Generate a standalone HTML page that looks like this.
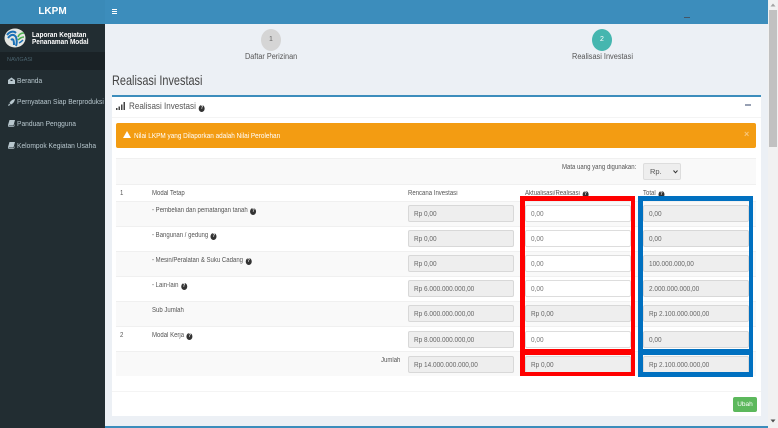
<!DOCTYPE html>
<html style="background:#ecf0f5"><head><meta charset="utf-8"><style>
*{box-sizing:border-box}
html,body{margin:0;padding:0;width:778px;height:428px;overflow:hidden;font-family:"Liberation Sans",sans-serif;color:#444}
body{filter:blur(.25px)}
.a{position:absolute}
.t{position:absolute;white-space:nowrap;font-size:7px;line-height:9px;color:#555;transform:scaleX(.86);transform-origin:0 50%}
.i{position:absolute;width:106px;height:17px;border:1px solid #d8d8d8;border-radius:2px;background:#eee;font-size:7.5px;line-height:15px;padding-left:5px;color:#666;white-space:nowrap}
.i span{display:inline-block;transform:scaleX(.86);transform-origin:0 50%}
.w{background:#fff;border-color:#ddd;color:#777}
.q{display:inline-block;position:relative;top:-1px;width:7px;height:7px;border-radius:50%;background:#333;color:#fff;font-size:5px;line-height:7px;text-align:center;font-weight:bold;vertical-align:-1px;margin-left:1px}
.n{position:absolute;left:17px;white-space:nowrap;font-size:7.5px;line-height:10px;color:#b8c7ce;transform:scaleX(.89);transform-origin:0 50%}
.s{position:absolute;left:116px;width:640px;background:#f9f9f9}
.l{position:absolute;left:116px;width:640px;height:1px;background:#f0f0f0}
</style></head><body>
<div class="a" style="left:0;top:0;width:768px;height:24px;background:#3c8dbc"></div>
<div class="a" style="left:0;top:0;width:105px;height:24px;background:#3a8ab8;color:#fff;font-weight:bold;font-size:10px;line-height:23px;text-align:center">LKPM</div>
<div class="a" style="left:112px;top:9px;width:5px;height:1.2px;background:#fff;box-shadow:0 2px 0 #fff,0 4px 0 #fff"></div>
<div class="a" style="left:684px;top:17px;width:6px;height:1px;background:#456"></div>
<div class="a" style="left:0;top:24px;width:105px;height:404px;background:#222d32"></div>
<div class="a" style="left:0;top:52px;width:105px;height:18px;background:#1a2226"></div>
<svg class="a" style="left:4px;top:28px" width="22" height="20" viewBox="0 0 22 20"><ellipse cx="11" cy="10" rx="10.500" ry="9.500" fill="#e4e6e2"/><path d="M3 7C6 3 10 3 12 5M4 10C7 6 10 6 12 9C13 12 13 15 12 18M7 12C9 10 10 12 10 17" fill="none" stroke="#1a6fb5" stroke-width="2"/><path d="M14 9C15 6 17 5 20 5M14 12C16 10 18 9 20 9" fill="none" stroke="#4caf50" stroke-width="1.500"/><path d="M15 15C17 14 18 13 19 12" fill="none" stroke="#1a6fb5" stroke-width="1.500"/></svg>
<div class="a" style="left:32px;top:32px;font-size:7px;line-height:7px;font-weight:bold;color:#fff;white-space:nowrap;transform:scaleX(.92);transform-origin:0 50%">Laporan Kegiatan<br>Penanaman Modal</div>
<div class="a" style="left:7px;top:57px;font-size:5.500px;line-height:7px;color:#4b646f">NAVIGASI</div>
<svg class="a" style="left:8px;top:77px" width="7" height="7" viewBox="0 0 7 7"><path d="M0 3L3.500 0.500L7 3V7H0Z M2.500 4H4.500V2.800H2.500Z" fill="#b8c7ce"/></svg>
<svg class="a" style="left:8px;top:99px" width="7" height="7" viewBox="0 0 7 7"><path d="M7 0C4 .5 2.500 2 1.500 4L3 5.500C5 4.500 6.500 3 7 0ZM1 4.500L0 7L2.500 6Z" fill="#b8c7ce"/></svg>
<svg class="a" style="left:8px;top:120px" width="7" height="7" viewBox="0 0 7 7"><path d="M1.500 0H7L5.500 5.500H1Q.2 6 1 6.200H5.800L6.500 3.500V6L5.500 7H1Q-.3 6.500 0 5Z" fill="#b8c7ce"/></svg>
<svg class="a" style="left:8px;top:142px" width="7" height="7" viewBox="0 0 7 7"><path d="M1.500 0H7L5.500 5.500H1Q.2 6 1 6.200H5.800L6.500 3.500V6L5.500 7H1Q-.3 6.500 0 5Z" fill="#b8c7ce"/></svg>
<div class="n" style="top:76px">Beranda</div>
<div class="n" style="top:97px">Pernyataan Siap Berproduksi</div>
<div class="n" style="top:119px">Panduan Pengguna</div>
<div class="n" style="top:141px">Kelompok Kegiatan Usaha</div>

<div class="a" style="left:261px;top:29px;width:20px;height:22px;border-radius:50%;background:#d5d5d5;color:#666;font-size:7px;line-height:22px;text-align:center">1</div>
<div class="a" style="left:592px;top:29px;width:20px;height:22px;border-radius:50%;background:#45b6af;color:#fff;font-size:7px;line-height:22px;text-align:center">2</div>
<div class="t" style="left:245px;top:52px;font-size:8px;line-height:10px;color:#555;transform:scaleX(.91)">Daftar Perizinan</div>
<div class="t" style="left:572px;top:52px;font-size:8px;line-height:10px;color:#555;transform:scaleX(.92)">Realisasi Investasi</div>
<div class="a" style="left:112px;top:72px;font-size:14px;line-height:16px;color:#444;white-space:nowrap;transform:scaleX(.78);transform-origin:0 50%">Realisasi Investasi</div>

<div class="a" style="left:112px;top:95px;width:649px;height:321px;background:#fff;border-top:2px solid #3c8dbc"></div>
<div class="a" style="left:112px;top:117px;width:649px;height:1px;background:#f4f4f4"></div>
<svg class="a" style="left:116px;top:102px" width="9" height="8" viewBox="0 0 9 8"><path d="M0 6h1.500v2H0zM2.500 4.500H4V8H2.500zM5 2.500h1.500V8H5zM7.500 0H9v8H7.500z" fill="#444"/></svg>
<div class="a" style="left:129px;top:101px;font-size:9.500px;line-height:11px;color:#555;white-space:nowrap;transform:scaleX(.85);transform-origin:0 50%">Realisasi Investasi <span class="q">?</span></div>
<div class="a" style="left:745px;top:104px;width:6px;height:1.500px;background:#97a0b3"></div>

<div class="a" style="left:116px;top:123px;width:640px;height:25px;background:#f39c12;border-radius:2px"></div>
<svg class="a" style="left:123px;top:131px" width="8" height="7" viewBox="0 0 8 7"><path d="M4 0L8 7H0Z" fill="#fff"/></svg>
<div class="a" style="left:134px;top:131px;font-size:7.500px;line-height:9px;color:#fff;white-space:nowrap;transform:scaleX(.855);transform-origin:0 50%">Nilai LKPM yang Dilaporkan adalah Nilai Perolehan</div>
<div class="a" style="left:744px;top:130px;font-size:9px;line-height:9px;color:#f8c67a;font-weight:bold">×</div>

<div class="s" style="top:158px;height:26px;border-top:1px solid #f0f0f0"></div>
<div class="s" style="top:201px;height:25px"></div>
<div class="s" style="top:251px;height:25px"></div>
<div class="s" style="top:301px;height:25px"></div>
<div class="s" style="top:351px;height:25px"></div>
<div class="l" style="top:184px"></div><div class="l" style="top:201px"></div><div class="l" style="top:226px"></div><div class="l" style="top:251px"></div><div class="l" style="top:276px"></div><div class="l" style="top:301px"></div><div class="l" style="top:326px"></div><div class="l" style="top:351px"></div>
<div class="a" style="left:112px;top:391px;width:649px;height:1px;background:#f4f4f4"></div>

<div class="t" style="left:562px;top:163px">Mata uang yang digunakan:</div>
<div class="a" style="left:643px;top:163px;width:38px;height:17px;background:#eee;border:1px solid #ddd;border-radius:2px;font-size:7.500px;line-height:15px;padding-left:6px;color:#555">Rp.</div>
<svg class="a" style="left:673px;top:170px" width="5" height="4" viewBox="0 0 5 4"><path d="M.5 .5L2.500 2.800L4.500 .5" fill="none" stroke="#333" stroke-width="1"/></svg>

<div class="t" style="left:120px;top:189px">1</div>
<div class="t" style="left:152px;top:189px">Modal Tetap</div>
<div class="t" style="left:408px;top:189px">Rencana Investasi</div>
<div class="t" style="left:525px;top:189px">Aktualisasi/Realisasi <span class="q">?</span></div>
<div class="t" style="left:643px;top:189px">Total <span class="q">?</span></div>

<div class="t" style="left:152px;top:206px">- Pembelian dan pematangan tanah <span class="q">?</span></div>
<div class="t" style="left:152px;top:231px">- Bangunan / gedung <span class="q">?</span></div>
<div class="t" style="left:152px;top:256px">- Mesin/Peralatan &amp; Suku Cadang <span class="q">?</span></div>
<div class="t" style="left:152px;top:281px">- Lain-lain <span class="q">?</span></div>
<div class="t" style="left:152px;top:306px">Sub Jumlah</div>
<div class="t" style="left:120px;top:331px">2</div>
<div class="t" style="left:152px;top:331px">Modal Kerja <span class="q">?</span></div>
<div class="t" style="left:381px;top:356px">Jumlah</div>

<div class="i" style="left:408px;top:205px"><span>Rp 0,00</span></div>
<div class="i" style="left:408px;top:230px"><span>Rp 0,00</span></div>
<div class="i" style="left:408px;top:255px"><span>Rp 0,00</span></div>
<div class="i" style="left:408px;top:280px"><span>Rp 6.000.000.000,00</span></div>
<div class="i" style="left:408px;top:305px"><span>Rp 6.000.000.000,00</span></div>
<div class="i" style="left:408px;top:331px"><span>Rp 8.000.000.000,00</span></div>
<div class="i" style="left:408px;top:356px"><span>Rp 14.000.000.000,00</span></div>

<div class="i w" style="left:525px;top:205px"><span>0,00</span></div>
<div class="i w" style="left:525px;top:230px"><span>0,00</span></div>
<div class="i w" style="left:525px;top:255px"><span>0,00</span></div>
<div class="i w" style="left:525px;top:280px"><span>0,00</span></div>
<div class="i" style="left:525px;top:305px"><span>Rp 0,00</span></div>
<div class="i w" style="left:525px;top:331px"><span>0,00</span></div>
<div class="i" style="left:525px;top:356px"><span>Rp 0,00</span></div>

<div class="i" style="left:643px;top:205px"><span>0,00</span></div>
<div class="i" style="left:643px;top:230px"><span>0,00</span></div>
<div class="i" style="left:643px;top:255px"><span>100.000.000,00</span></div>
<div class="i" style="left:643px;top:280px"><span>2.000.000.000,00</span></div>
<div class="i" style="left:643px;top:305px"><span>Rp 2.100.000.000,00</span></div>
<div class="i" style="left:643px;top:331px"><span>0,00</span></div>
<div class="i" style="left:643px;top:356px"><span>Rp 2.100.000.000,00</span></div>

<div class="a" style="left:520px;top:196px;width:115px;height:180px;border:solid #f00;border-width:5px 4px 4px 5px"></div>
<div class="a" style="left:520px;top:349px;width:115px;height:6px;background:#f00"></div>
<div class="a" style="left:638px;top:196px;width:115px;height:181px;border:solid #0070c0;border-width:5px 4px 5px 5px"></div>
<div class="a" style="left:638px;top:349px;width:115px;height:6px;background:#0070c0"></div>

<div class="a" style="left:733px;top:397px;width:24px;height:15px;background:#5cb85c;border-radius:2px;color:#fff;font-size:6.500px;line-height:15px;text-align:center">Ubah</div>

<div class="a" style="left:105px;top:426px;width:663px;height:2px;background:#3c8dbc"></div>
<div class="a" style="left:768px;top:0;width:10px;height:428px;background:#f1f1f1"></div>
<div class="a" style="left:769px;top:10px;width:8px;height:137px;background:#c1c1c1"></div>
<svg class="a" style="left:770px;top:3px" width="6" height="4" viewBox="0 0 6 4"><path d="M3 .5L5.500 3.500H.5Z" fill="#a3a3a3"/></svg>
<svg class="a" style="left:770px;top:419px" width="6" height="4" viewBox="0 0 6 4"><path d="M3 3.500L5.500 .5H.5Z" fill="#505050"/></svg>
</body></html>
